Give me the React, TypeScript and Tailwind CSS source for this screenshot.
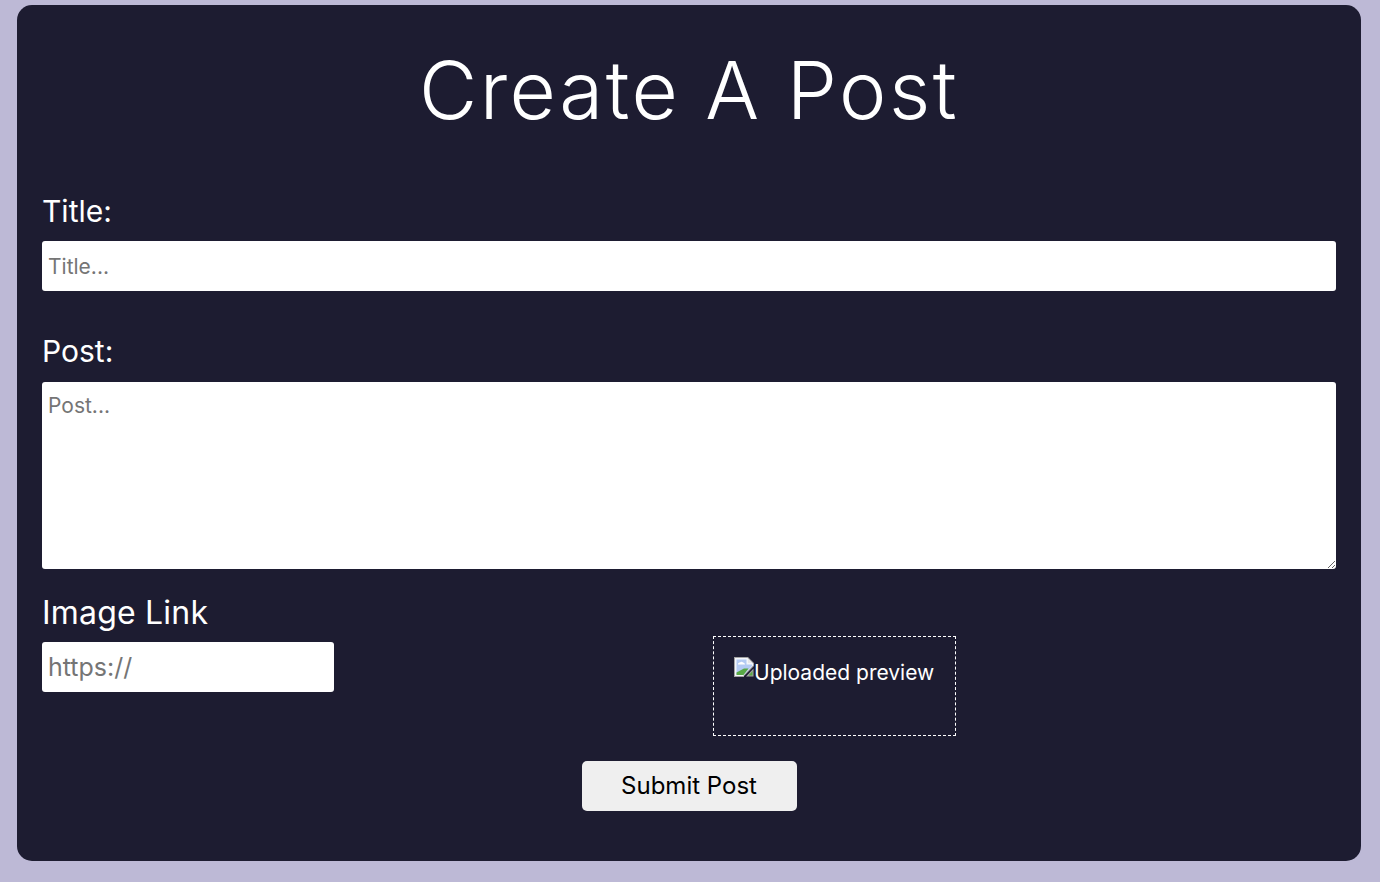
function BrokenImage() {
  return (
    <svg width="20" height="20" viewBox="0 0 20 20" className="mb-[3px] inline-block align-baseline">
      <path d="M0 0H14L20 6V9L10 19V20H0Z" fill="#a3a3a3" />
      <path d="M1 1H13.5L19 6.5V8.6L9.5 18.5V19H1Z" fill="#f4f6fb" />
      <path d="M2.5 2.5H12.5V7.5H18V9L10 17.5H2.5Z" fill="#b4cbf3" />
      <path d="M4 7C4 6 5 5.5 6 5.5C6.5 4.5 8.5 4.5 9 5.5C10 5.5 11 6.5 11 7.5H4Z" fill="#ffffff" />
      <path d="M2.5 18V15.5L10 11.5H14.5L9.5 18Z" fill="#58a845" />
      <path d="M14 1.5V6H18.5Z" fill="#e8e8e8" />
      <path d="M19.5 11.5V19.5H12Z" fill="#a3a3a3" />
      <path d="M18.5 14V18.5H14.5Z" fill="#58a845" />
    </svg>
  );
}

export default function App() {
  const font = "font-['Inter','Noto_Sans',sans-serif]";
  return (
    <div className={`min-h-[882px] bg-[#bdb9d6] pl-[17px] pr-[19px] pt-[5px] ${font}`}>
      <div className="h-[856px] rounded-[15px] bg-[#1d1c31] px-[25px] text-white">
        <h1 className="pt-[37px] text-center text-[80px] font-light leading-[96px] tracking-[2.5px]">Create A Post</h1>
        <div className="mt-[53px] text-[30px] leading-[40px]">Title:</div>
        <input placeholder="Title..." className="mt-[10px] block h-[50px] w-full rounded-[3px] bg-white px-[6px] text-[21px] text-black placeholder:text-[#757575]" />
        <div className="mt-[40px] text-[30px] leading-[40px]">Post:</div>
        <textarea placeholder="Post..." className="mt-[11px] block h-[187px] w-full rounded-[3px] bg-white px-[6px] pb-[6px] pt-[8px] text-[21px] text-black placeholder:text-[#757575]" />
        <div className="flex">
          <div className="w-[292px]">
            <div className="mt-[24px] text-[32px] leading-[40px] tracking-[0.2px]">Image Link</div>
            <input placeholder="https://" className="mt-[9px] block h-[50px] w-full rounded-[3px] bg-white px-[6px] text-[25px] text-black placeholder:text-[#757575]" />
          </div>
          <div className="ml-[379px] mt-[67px] h-[100px] w-[243px] border border-dashed border-white px-[20px] pt-[20px] text-[21px] leading-[24px]">
            <BrokenImage />
            Uploaded preview
          </div>
        </div>
        <div className="mt-[25px] flex justify-center">
          <button className="h-[50px] w-[215px] rounded-[5px] bg-[#efefef] text-[24px] text-black">Submit Post</button>
        </div>
      </div>
    </div>
  );
}
